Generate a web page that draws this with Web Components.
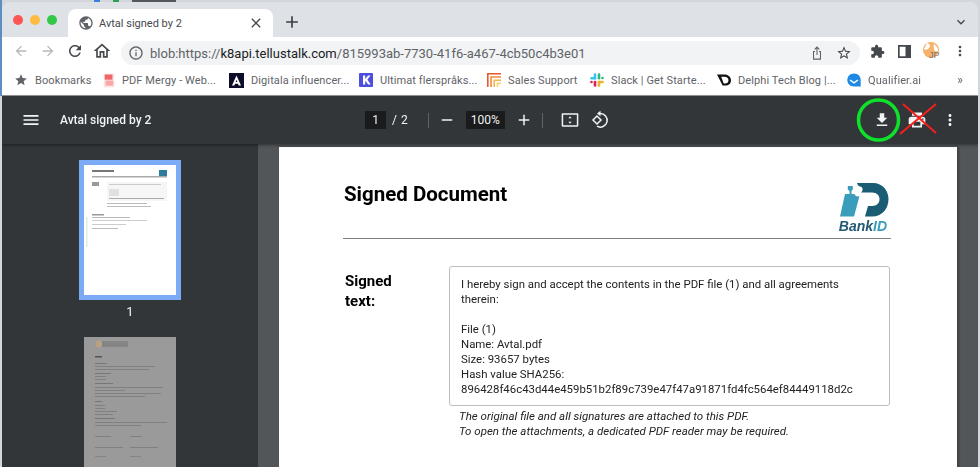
<!DOCTYPE html>
<html lang="en">
<head>
<meta charset="utf-8">
<title>Avtal signed by 2</title>
<style>
    html, body { margin: 0; padding: 0; }
    body { width: 980px; height: 467px; overflow: hidden; background: #d9dde2; font-family: "Roboto", "Liberation Sans", sans-serif; }
</style>
</head>
<body>
<browser-window>
    <tab-strip slot="top" title-text="Avtal signed by 2"></tab-strip>
    <nav-bar slot="top"></nav-bar>
    <bookmark-bar slot="top">
        <book-mark w="89" label="Bookmarks"><ui-icon name="starFill" size="14" color="#5f6368"></ui-icon></book-mark>
        <book-mark w="126" label="PDF Mergy - Web..."><svg width="12" height="15" viewBox="0 0 14 16"><rect x="1" y="0" width="12" height="16" fill="#fbe3e3"/><rect x="2" y="1" width="9" height="6" fill="#f0646a"/><rect x="3" y="8" width="9" height="6" fill="#f9a7a9"/></svg></book-mark>
        <book-mark w="130" label="Digitala influencer..."><svg width="15" height="15" viewBox="0 0 15 15"><rect width="15" height="15" fill="#0d0d2b"/><path d="M7.5 2.5L12 12.5H9.7L9 10.8H6L5.3 12.500H3zM6.700 9H8.300L7.500 6.800z" fill="#fff"/></svg></book-mark>
        <book-mark w="128" label="Ultimat flerspråks..."><svg width="14" height="14" viewBox="0 0 14 14"><rect width="14" height="14" rx="1" fill="#4c4ee0"/><path d="M4 2.500H6.200V6L9 2.500H11.500L8.400 6.500 11.700 11.500H9.200L6.200 7.700V11.500H4z" fill="#fff"/></svg></book-mark>
        <book-mark w="103" label="Sales Support"><svg width="14" height="14" viewBox="0 0 14 14" fill="none"><path d="M.8 14V.8H14" stroke="#e8562a" stroke-width="1.600"/><path d="M4 14V4H14" stroke="#f08a3c" stroke-width="1.600"/><path d="M7.200 14V7.200H14" stroke="#f7b24f" stroke-width="1.600"/><path d="M10.400 14V10.400H14" stroke="#fbd06a" stroke-width="1.600"/></svg></book-mark>
        <book-mark w="127" label="Slack | Get Starte..."><svg width="14" height="14" viewBox="0 0 14 14" fill="none" stroke-width="2.600" stroke-linecap="round"><path d="M5 1.500V5.200" stroke="#36c5f0"/><path d="M1.500 5.200H4.800" stroke="#36c5f0"/><path d="M12.500 5V5" stroke="#2eb67d"/><path d="M9 1.500V5.200" stroke="#2eb67d"/><path d="M9 9H12.500" stroke="#ecb22e"/><path d="M9 9V12.500" stroke="#ecb22e"/><path d="M1.500 9H1.500" stroke="#e01e5a"/><path d="M5 9V12.500" stroke="#e01e5a"/></svg></book-mark>
        <book-mark w="130" label="Delphi Tech Blog |..."><svg width="14" height="14" viewBox="0 0 15 14"><path d="M0 1H8C12 1 15 3.800 15 7.200 15 10.700 12.500 13 8.800 13H6ZM4.500 3.500L7.200 10.800H8.600C11 10.800 12.300 9.200 12.300 7.200 12.300 5 10.600 3.500 8 3.500Z" fill="#111" fill-rule="evenodd"/></svg></book-mark>
        <book-mark w="90" label="Qualifier.ai"><svg width="14" height="14" viewBox="0 0 14 14"><path d="M7 .5C3.200.5 .3 3.300 .3 7 .3 10.600 3.200 13.500 7 13.500H13.700V7C13.700 3.300 10.800.5 7 .5Z" fill="#1e88e5"/><path d="M3 7L7 9.800 11 7" fill="none" stroke="#fff" stroke-width="1.500"/></svg></book-mark>
        <span slot="more">»</span>
    </bookmark-bar>
    <pdf-toolbar slot="top" title-text="Avtal signed by 2"></pdf-toolbar>
    <pdf-thumbs slot="side"></pdf-thumbs>
    <pdf-page slot="main"></pdf-page>
</browser-window>

<script>
const ICONS = {
    globe: 'M12 2C6.48 2 2 6.48 2 12s4.48 10 10 10 10-4.48 10-10S17.52 2 12 2zm-1 17.93c-3.95-.49-7-3.85-7-7.93 0-.62.08-1.21.21-1.79L9 15v1c0 1.1.9 2 2 2v1.93zm6.9-2.54c-.26-.81-1-1.39-1.9-1.39h-1v-3c0-.55-.45-1-1-1H8v-2h2c.55 0 1-.45 1-1V7h2c1.1 0 2-.9 2-2v-.41c2.93 1.19 5 4.06 5 7.41 0 2.08-.8 3.97-2.1 5.39z',
    back: 'M20 11H7.830l5.590-5.590L12 4l-8 8 8 8 1.410-1.410L7.830 13H20v-2z',
    forward: 'M12 4l-1.410 1.410L16.170 11H4v2h12.170l-5.580 5.590L12 20l8-8z',
    reload: 'M17.650 6.350C16.200 4.900 14.210 4 12 4c-4.420 0-7.990 3.580-7.990 8s3.570 8 7.990 8c3.730 0 6.840-2.550 7.730-6h-2.080c-.820 2.330-3.040 4-5.650 4-3.310 0-6-2.690-6-6s2.690-6 6-6c1.660 0 3.140.690 4.220 1.780L13 11h7V4l-2.350 2.350z',
    home: 'M12 5.690l5 4.500V18h-2v-6H9v6H7v-7.810l5-4.500M12 3L2 12h3v8h6v-6h2v6h6v-8h3L12 3z',
    info: 'M11 7h2v2h-2zm0 4h2v6h-2zm1-9C6.480 2 2 6.480 2 12s4.480 10 10 10 10-4.480 10-10S17.520 2 12 2zm0 18c-4.410 0-8-3.590-8-8s3.590-8 8-8 8 3.590 8 8-3.590 8-8 8z',
    star: 'M22 9.240l-7.190-.620L12 2 9.190 8.630 2 9.240l5.460 4.730L5.820 21 12 17.270 18.180 21l-1.630-7.030L22 9.240zM12 15.400l-3.760 2.270 1-4.280-3.320-2.880 4.380-.380L12 6.100l1.710 4.040 4.380.380-3.320 2.880 1 4.280L12 15.400z',
    starFill: 'M12 17.270L18.180 21l-1.640-7.030L22 9.240l-7.190-.610L12 2 9.190 8.630 2 9.240l5.460 4.730L5.820 21z',
    puzzle: 'M20.500 11H19V7c0-1.100-.9-2-2-2h-4V3.500C13 2.120 11.880 1 10.500 1S8 2.120 8 3.500V5H4c-1.100 0-1.990.9-1.990 2v3.800H3.500c1.490 0 2.700 1.210 2.700 2.700s-1.210 2.700-2.700 2.700H2V20c0 1.100.9 2 2 2h3.800v-1.500c0-1.490 1.210-2.700 2.700-2.700 1.490 0 2.700 1.210 2.700 2.700V22H17c1.100 0 2-.9 2-2v-4h1.500c1.380 0 2.500-1.120 2.500-2.500S21.880 11 20.500 11z',
    share: 'M12 2L8 6l1.200 1.200L11.200 5.200V15h1.600V5.200l2 2L16 6zM6 9v13h12V9h-3v1.600h1.400v9.800H7.600v-9.800H9V9z',
    kebab: 'M12 8c1.100 0 2-.9 2-2s-.9-2-2-2-2 .9-2 2 .9 2 2 2zm0 2c-1.100 0-2 .9-2 2s.9 2 2 2 2-.9 2-2-.9-2-2-2zm0 6c-1.100 0-2 .9-2 2s.9 2 2 2 2-.9 2-2-.9-2-2-2z',
    menu: 'M3 18h18v-2H3v2zm0-5h18v-2H3v2zm0-7v2h18V6H3z',
    minus: 'M19 13H5v-2h14v2z',
    plus: 'M19 13h-6v6h-2v-6H5v-2h6V5h2v6h6v2z',
    download: 'M19 9h-4V3H9v6H5l7 7 7-7zM5 18v2h14v-2H5z',
    print: 'M19 8H5c-1.660 0-3 1.340-3 3v6h4v4h12v-4h4v-6c0-1.660-1.340-3-3-3zm-3 11H8v-5h8v5zm3-7c-.55 0-1-.45-1-1s.45-1 1-1 1 .45 1 1-.45 1-1 1zm-1-9H6v4h12V3z',
    close: 'M19 6.410L17.590 5 12 10.590 6.410 5 5 6.410 10.590 12 5 17.590 6.410 19 12 13.410 17.590 19 19 17.590 13.410 12z',
    chevron: 'M7.410 8.590L12 13.170l4.590-4.580L18 10l-6 6-6-6z',
    fit: 'M3 4h18c.55 0 1 .45 1 1v14c0 .55-.45 1-1 1H3c-.55 0-1-.45-1-1V5c0-.55.45-1 1-1zm.8 1.800v12.400h16.400V5.800zM12 7.500l2 2.300h-4zM12 16.500l-2-2.300h4z'
};

class UiIcon extends HTMLElement {
    constructor() {
        super();
        this.attachShadow({ mode: 'open' });
    }

    connectedCallback() {
        const size = this.getAttribute('size') || 24;
        const color = this.getAttribute('color') || 'currentColor';
        this.shadowRoot.innerHTML = `
            <style>
                :host { display: inline-flex; flex: none; }
                svg { display: block; fill-rule: evenodd; }
            </style>
            <svg width="${size}" height="${size}" viewBox="0 0 24 24" fill="${color}"><path d="${ICONS[this.getAttribute('name')]}"/></svg>
        `;
    }
}

class BrowserWindow extends HTMLElement {
    constructor() {
        super();
        this.attachShadow({ mode: 'open' });
        this.shadowRoot.innerHTML = `
            <style>
                :host { display: block; position: relative; width: 980px; height: 467px; overflow: hidden; padding: 2px 2px 0 2px; box-sizing: border-box; background: #d3d7dc; }
                .frame { height: 465px; display: flex; flex-direction: column; border-radius: 8px 8px 0 0; overflow: hidden; background: #dee1e6; filter: blur(.3px); }
                .body { flex: 1; display: flex; min-height: 0; background: #525659; }
                .edge { position: absolute; top: 0; height: 2px; }
            </style>
            <div class="edge" style="left:94px;width:6px;background:#3b7de0"></div>
            <div class="edge" style="left:113px;width:6px;background:#2e9e52"></div>
            <div class="edge" style="left:132px;width:44px;background:#55585c"></div>
            <div class="edge" style="left:0;width:2px;height:96px;background:#5b8fc0"></div>
            <div class="frame">
                <slot name="top"></slot>
                <div class="body">
                    <slot name="side"></slot>
                    <slot name="main"></slot>
                </div>
            </div>
        `;
    }
}

class TabStrip extends HTMLElement {
    constructor() {
        super();
        this.attachShadow({ mode: 'open' });
        this.shadowRoot.innerHTML = `
            <style>
                :host { display: flex; height: 35px; align-items: flex-end; background: #dee1e6; color: #45494d; font: 11px "Roboto", "Liberation Sans", sans-serif; }
                .dots { display: flex; gap: 7px; width: 66px; height: 35px; padding: 13px 0 0 11px; box-sizing: border-box; }
                .dots i { width: 10px; height: 10px; border-radius: 50%; }
                .tab { position: relative; width: 205px; height: 28px; box-sizing: border-box; padding: 0 9px 0 10px; display: flex; align-items: center; gap: 5px; background: #fff; border-radius: 8px 8px 0 0; }
                .tab span { flex: 1; white-space: nowrap; }
                .new { margin: 0 0 5px 9px; padding: 0; display: flex; }
                .chev { margin: 0 9px 7px auto; display: flex; }
            </style>
            <div class="dots"><i style="background:#fc5753"></i><i style="background:#fdbc40"></i><i style="background:#33c748"></i></div>
            <div class="tab">
                <ui-icon name="globe" size="16" color="#5f6368"></ui-icon>
                <span id="title"></span>
                <ui-icon name="close" size="16" color="#45494d"></ui-icon>
            </div>
            <div class="new"><ui-icon name="plus" size="20" color="#3c4043"></ui-icon></div>
            <div class="chev"><ui-icon name="chevron" size="16" color="#45494d"></ui-icon></div>
        `;
    }

    connectedCallback() {
        this.shadowRoot.getElementById('title').textContent = this.getAttribute('title-text');
    }
}

class NavBar extends HTMLElement {
    constructor() {
        super();
        this.attachShadow({ mode: 'open' });
        this.shadowRoot.innerHTML = `
            <style>
                :host { display: flex; height: 28px; background: #fff; align-items: flex-end; box-sizing: border-box; padding: 0 0 0 5px; color: #5f6368; font: 13px "Roboto", "Liberation Sans", sans-serif; }
                .btn { width: 27px; height: 28px; display: flex; align-items: center; justify-content: center; }
                .url { width: 739px; height: 24px; margin-left: 6px; border-radius: 12px; background: #f1f3f4; display: flex; align-items: center; padding: 0 8px 0 7px; box-sizing: border-box; }
                .url .text { flex: 1; margin-left: 6px; white-space: nowrap; }
                .url b { font-weight: 400; color: #202124; }
                .url ui-icon + ui-icon { margin-left: 11px; }
            </style>
            <div class="btn"><ui-icon name="back" size="16" color="#b4b7ba"></ui-icon></div>
            <div class="btn"><ui-icon name="forward" size="16" color="#b4b7ba"></ui-icon></div>
            <div class="btn"><ui-icon name="reload" size="18" color="#45494d"></ui-icon></div>
            <div class="btn"><ui-icon name="home" size="20" color="#45494d"></ui-icon></div>
            <div class="url">
                <ui-icon name="info" size="16" color="#5f6368"></ui-icon>
                <div class="text">blob:https://<b>k8api.tellustalk.com</b>/815993ab-7730-41f6-a467-4cb50c4b3e01</div>
                <ui-icon name="share" size="16" color="#5f6368"></ui-icon>
                <ui-icon name="star" size="16" color="#45494d"></ui-icon>
            </div>
            <div class="btn" style="margin-left:4px"><ui-icon name="puzzle" size="15" color="#45494d"></ui-icon></div>
            <div class="btn"><svg width="13" height="13" viewBox="0 0 13 13"><path d="M0 0H13V13H0ZM1.700 1.700V11.300H7.500V1.700Z" fill="#45494d" fill-rule="evenodd"/></svg></div>
            <div class="btn">
                <svg width="20" height="20" viewBox="0 0 20 20"><circle cx="9" cy="9" r="8" fill="#f6b26b"/><path d="M5 2c3 1 4 3 2 5S3 9 2 8M12 3c2 2 4 3 4 7-2 1-4 0-4-2s-1-3 0-5z" fill="#fff"/><text x="7" y="17" font-family="Liberation Sans" font-size="9" fill="#777">JP</text></svg>
            </div>
            <div class="btn" style="margin-left:1px"><ui-icon name="kebab" size="16" color="#45494d"></ui-icon></div>
        `;
    }
}

class BookmarkBar extends HTMLElement {
    constructor() {
        super();
        this.attachShadow({ mode: 'open' });
        this.shadowRoot.innerHTML = `
            <style>
                :host { display: flex; height: 31px; padding: 0 0 0 12px; box-sizing: border-box; align-items: center; background: #fff; border-bottom: 1px solid #9a9c9e; color: #5f6368; font: 11px "Roboto", "Liberation Sans", sans-serif; letter-spacing: .1px; }
                .more { margin-left: auto; margin-right: 15px; font-size: 12px; }
            </style>
            <slot></slot>
            <div class="more"><slot name="more"></slot></div>
        `;
    }
}

class BookMark extends HTMLElement {
    constructor() {
        super();
        this.attachShadow({ mode: 'open' });
        this.shadowRoot.innerHTML = `
            <style>
                :host { display: flex; flex: none; align-items: center; gap: 7px; white-space: nowrap; }
                ::slotted(svg), ::slotted(ui-icon) { flex: none; display: block; }
            </style>
            <slot></slot><span id="label"></span>
        `;
    }

    connectedCallback() {
        this.style.width = this.getAttribute('w') + 'px';
        this.shadowRoot.getElementById('label').textContent = this.getAttribute('label');
    }
}

class PdfToolbar extends HTMLElement {
    constructor() {
        super();
        this.attachShadow({ mode: 'open' });
        this.shadowRoot.innerHTML = `
            <style>
                :host { display: flex; position: relative; z-index: 2; height: 48px; flex: none; align-items: center; box-sizing: border-box; padding-left: 19px; background: #323639; color: #f1f3f4; font: 500 12px "Roboto", "Liberation Sans", sans-serif; box-shadow: 0 1px 3px rgba(0,0,0,.45); }
                .title { width: 305px; margin-left: 19px; white-space: nowrap; }
                .num { background: #191b1c; height: 18px; display: flex; align-items: center; justify-content: center; font-weight: 400; }
                .sep { width: 1px; height: 15px; background: #5f6368; }
                .slash { font-weight: 400; }
                .mark { position: absolute; left: 0; top: 0; width: 976px; height: 48px; overflow: visible; pointer-events: none; }
            </style>
            <ui-icon name="menu" size="20" color="#f1f3f4"></ui-icon>
            <div class="title" id="title"></div>
            <div class="num" style="width:21px">1</div>
            <span class="slash" style="margin-left:6px">/</span>
            <span class="slash" style="margin-left:4px">2</span>
            <div class="sep" style="margin-left:20px"></div>
            <ui-icon name="minus" size="18" color="#f1f3f4" style="margin-left:9px"></ui-icon>
            <div class="num" style="width:39px;margin-left:10px">100%</div>
            <ui-icon name="plus" size="18" color="#f1f3f4" style="margin-left:10px"></ui-icon>
            <div class="sep" style="margin-left:9px"></div>
            <ui-icon name="fit" size="20" color="#f1f3f4" style="margin-left:17px"></ui-icon>
            <svg width="20" height="20" viewBox="0 0 20 20" fill="none" stroke="#f1f3f4" stroke-width="1.500" style="margin-left:10px;flex:none">
                <path d="M7 6L11 10 7 14 3 10Z"/>
                <path d="M10 3.500A6.800 6.800 0 1 1 7 16.200"/>
                <path d="M10.500 .8V6.200L7 3.500Z" fill="#f1f3f4" stroke="none"/>
            </svg>
            <ui-icon name="download" size="18" color="#f1f3f4" style="margin-left:263px"></ui-icon>
            <ui-icon name="print" size="20" color="#f1f3f4" style="margin-left:16px"></ui-icon>
            <ui-icon name="kebab" size="18" color="#f1f3f4" style="margin-left:14px"></ui-icon>
            <svg class="mark" viewBox="0 0 976 48" fill="none">
                <circle cx="876.500" cy="24" r="20" stroke="#0fe02c" stroke-width="3.500"/>
                <path d="M901 8L934 37M934 8L898 38" stroke="#f5201c" stroke-width="2"/>
            </svg>
        `;
    }

    connectedCallback() {
        this.shadowRoot.getElementById('title').textContent = this.getAttribute('title-text');
    }
}

class PdfThumbs extends HTMLElement {
    constructor() {
        super();
        this.attachShadow({ mode: 'open' });
        this.shadowRoot.innerHTML = `
            <style>
                :host { display: flex; flex-direction: column; align-items: center; flex: none; width: 256px; height: 100%; overflow: hidden; box-sizing: border-box; padding-top: 16px; background: #323639; color: #f1f3f4; font: 13px "Roboto", "Liberation Sans", sans-serif; }
                .sel { width: 92px; height: 130px; border: 5px solid #7baaf7; background: #fff; flex: none; }
                .num { margin: 3px 0 17px; height: 17px; line-height: 17px; }
                .other { width: 92.500px; height: 140px; background: #9a9a9a; flex: none; }
                svg { display: block; filter: blur(.6px); }
            </style>
            <div class="sel">
                <svg width="92" height="130" viewBox="0 0 92 130">
                    <rect x="8" y="5" width="22" height="2" fill="#777"/>
                    <rect x="75" y="5" width="8" height="6" fill="#2d7c9c"/>
                    <rect x="8" y="11" width="75" height="1.500" fill="#aaa"/>
                    <rect x="8" y="17" width="7" height="4" fill="#999"/>
                    <rect x="23" y="17" width="60" height="19" fill="#f6f6f6"/>
                    <rect x="25" y="19" width="52" height="1" fill="#ccc"/>
                    <rect x="25" y="24" width="10" height="7" fill="#e0e0e0"/>
                    <rect x="25" y="33" width="55" height="1" fill="#aaa"/>
                    <rect x="23" y="38" width="40" height="1" fill="#bbb"/>
                    <rect x="23" y="41" width="44" height="1" fill="#bbb"/>
                    <rect x="8" y="49" width="12" height="1.500" fill="#999"/>
                    <rect x="8" y="52" width="38" height="1" fill="#bbb"/>
                    <rect x="8" y="55" width="55" height="1" fill="#ccc"/>
                    <rect x="8" y="59" width="34" height="1" fill="#ccc"/>
                    <rect x="8" y="63" width="26" height="1" fill="#bbb"/>
                    <rect x="2" y="52" width="1.500" height="30" fill="#e0ece3"/>
                </svg>
            </div>
            <div class="num">1</div>
            <div class="other">
                <svg width="93" height="140" viewBox="0 0 93 140">
                    <circle cx="15" cy="7" r="3.500" fill="#b5a283"/>
                    <rect x="18" y="4" width="26" height="6" fill="#858585"/>
                    <rect x="11" y="19" width="7" height="1.500" fill="#555"/>
                    <rect x="11" y="26" width="12" height="1" fill="#777"/>
                    <rect x="11" y="29" width="60" height="1" fill="#808080"/>
                    <rect x="11" y="32" width="54" height="1" fill="#808080"/>
                    <rect x="11" y="36" width="16" height="1" fill="#777"/>
                    <rect x="11" y="39" width="11" height="1" fill="#808080"/>
                    <rect x="11" y="42" width="11" height="1" fill="#808080"/>
                    <rect x="11" y="46" width="18" height="1" fill="#777"/>
                    <rect x="11" y="50" width="68" height="1" fill="#808080"/>
                    <rect x="11" y="53" width="30" height="1" fill="#808080"/>
                    <rect x="11" y="56" width="66" height="1" fill="#808080"/>
                    <rect x="11" y="59" width="50" height="1" fill="#808080"/>
                    <rect x="11" y="64" width="7" height="1" fill="#777"/>
                    <rect x="11" y="68" width="10" height="1" fill="#808080"/>
                    <rect x="11" y="71" width="10" height="1" fill="#808080"/>
                    <rect x="11" y="74" width="22" height="1" fill="#808080"/>
                    <rect x="11" y="77" width="18" height="1" fill="#808080"/>
                    <rect x="11" y="81" width="20" height="1" fill="#777"/>
                    <rect x="11" y="85" width="72" height="1" fill="#808080"/>
                    <rect x="11" y="88" width="46" height="1" fill="#808080"/>
                    <rect x="11" y="99" width="16" height="1" fill="#808080"/>
                    <rect x="46" y="99" width="12" height="1" fill="#808080"/>
                    <rect x="11" y="110" width="28" height="1" fill="#808080"/>
                    <rect x="46" y="110" width="28" height="1" fill="#808080"/>
                    <rect x="11" y="119" width="11" height="1" fill="#858585"/>
                    <rect x="46" y="119" width="11" height="1" fill="#858585"/>
                    <rect x="27" y="135" width="40" height="1" fill="#858585"/>
                </svg>
            </div>
        `;
    }
}

class PdfPage extends HTMLElement {
    constructor() {
        super();
        this.attachShadow({ mode: 'open' });
        this.shadowRoot.innerHTML = `
            <style>
                :host { display: block; flex: 1; min-width: 0; padding: 3px 0 0 21px; box-sizing: border-box; background: #525659; overflow: hidden; }
                .page { width: 678px; height: 400px; background: #fff; padding: 35px 66px 0 64px; box-sizing: border-box; color: #111; font: 11.400px/15px "Roboto", "Liberation Sans", sans-serif; box-shadow: 2px 0 2px rgba(0,0,0,.25); }
                header { display: flex; justify-content: space-between; height: 56px; border-bottom: 1.500px solid #808080; margin-bottom: 27px; }
                h1 { margin: 0 0 0 1px; font: 700 20.500px/24px "Roboto", "Liberation Sans", sans-serif; color: #000; }
                .logo { margin-right: 2px; width: 52px; text-align: right; }
                .logo svg { display: block; margin-left: auto; }
                .logo div { margin: 3px 2px 0 0; font: italic 700 14px/12px "Liberation Sans", sans-serif; color: #235a73; white-space: nowrap; }
                .logo span { color: #3a9dbc; }
                .row { display: flex; }
                .label { width: 104px; margin-left: 2px; padding-top: 5px; font: 700 15px/20px "Roboto", "Liberation Sans", sans-serif; color: #000; }
                .signed { width: 441px; height: 140px; box-sizing: border-box; border: 1.500px solid #bdbdbd; border-radius: 3px; padding: 10px 11px 0; white-space: pre-line; color: #222; }
                .note { margin: 3px 0 0 116px; font-style: italic; font-size: 11.500px; color: #222; }
            </style>
            <div class="page">
                <header>
                    <h1>Signed Document</h1>
                    <div class="logo">
                        <svg width="50" height="35" viewBox="0 0 50 35">
                            <path d="M6 12H10.500V9L8.800 7.500V4H13.800V7.500L12.500 9V12H15.500C16.500 14.500 18.500 15 20.500 14L15 34.500H1Z" fill="#3a9dbc"/>
                            <path d="M18 1H34C44 1 49.500 9 49.500 17 49.500 27 43 34.500 33 34.500H26L29 24H33C38 24 40.500 21 40.500 17 40.500 13.500 38 10.500 33 10.500H22C24.500 8.500 24 5 21 4.500 19.500 4.200 18.500 3 18 1Z" fill="#1a5c74"/>
                        </svg>
                        <div>Bank<span>ID</span></div>
                    </div>
                </header>
                <div class="row">
                    <div class="label">Signed<br>text:</div>
                    <div class="signed">I hereby sign and accept the contents in the PDF file (1) and all agreements
therein:

File (1)
Name: Avtal.pdf
Size: 93657 bytes
Hash value SHA256:
896428f46c43d44e459b51b2f89c739e47f47a91871fd4fc564ef84449118d2c</div>
                </div>
                <div class="note">The original file and all signatures are attached to this PDF.<br>To open the attachments, a dedicated PDF reader may be required.</div>
            </div>
        `;
    }
}

customElements.define('ui-icon', UiIcon);
customElements.define('browser-window', BrowserWindow);
customElements.define('tab-strip', TabStrip);
customElements.define('nav-bar', NavBar);
customElements.define('bookmark-bar', BookmarkBar);
customElements.define('book-mark', BookMark);
customElements.define('pdf-toolbar', PdfToolbar);
customElements.define('pdf-thumbs', PdfThumbs);
customElements.define('pdf-page', PdfPage);
</script>
</body>
</html>
